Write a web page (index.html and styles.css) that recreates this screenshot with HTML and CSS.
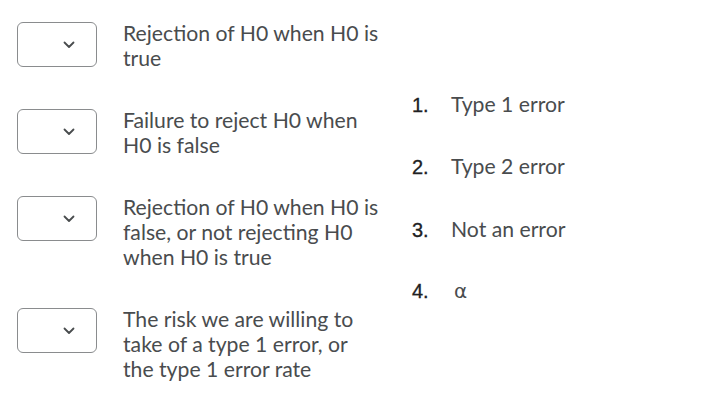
FILE: index.html
```html
<!DOCTYPE html>
<html>
<head>
<meta charset="utf-8">
<link rel="stylesheet" href="styles.css">
</head>
<body>
<div class="page">
  <div class="questions">
    <div class="row">
      <div class="select"><svg class="chev" width="12" height="8" viewBox="0 0 12 8"><path d="M1.5 1.5 L6 6 L10.5 1.5" fill="none" stroke="#494c4e" stroke-width="1.8" stroke-linecap="round" stroke-linejoin="round"/></svg></div>
      <div class="qtext">Rejection of H0 when H0 is true</div>
    </div>
    <div class="row">
      <div class="select"><svg class="chev" width="12" height="8" viewBox="0 0 12 8"><path d="M1.5 1.5 L6 6 L10.5 1.5" fill="none" stroke="#494c4e" stroke-width="1.8" stroke-linecap="round" stroke-linejoin="round"/></svg></div>
      <div class="qtext">Failure to reject H0 when H0 is false</div>
    </div>
    <div class="row">
      <div class="select"><svg class="chev" width="12" height="8" viewBox="0 0 12 8"><path d="M1.5 1.5 L6 6 L10.5 1.5" fill="none" stroke="#494c4e" stroke-width="1.8" stroke-linecap="round" stroke-linejoin="round"/></svg></div>
      <div class="qtext">Rejection of H0 when H0 is false, or not rejecting H0 when H0 is true</div>
    </div>
    <div class="row">
      <div class="select"><svg class="chev" width="12" height="8" viewBox="0 0 12 8"><path d="M1.5 1.5 L6 6 L10.5 1.5" fill="none" stroke="#494c4e" stroke-width="1.8" stroke-linecap="round" stroke-linejoin="round"/></svg></div>
      <div class="qtext">The risk we are willing to take of a type 1 error, or the type 1 error rate</div>
    </div>
  </div>
  <ol class="answers">
    <li><span class="num">1.</span><span class="atext">Type 1 error</span></li>
    <li><span class="num">2.</span><span class="atext">Type 2 error</span></li>
    <li><span class="num">3.</span><span class="atext">Not an error</span></li>
    <li><span class="num">4.</span><span class="atext alpha">α</span></li>
  </ol>
</div>
</body>
</html>
```
FILE: styles.css
```css
html, body {
  margin: 0;
  padding: 0;
  background: #ffffff;
}
body {
  font-family: Lato, "Noto Sans", sans-serif;
  color: #494c4e;
}
.page {
  display: flex;
  align-items: flex-start;
  padding: 21px 0 0 17px;
}
.questions {
  display: flex;
  flex-direction: column;
  gap: 37px;
}
.row {
  display: flex;
  align-items: flex-start;
}
.select {
  box-sizing: border-box;
  width: 80px;
  height: 45px;
  margin-top: 1px;
  border: 1px solid #8a8c8e;
  border-radius: 6px;
  display: flex;
  align-items: center;
  justify-content: flex-end;
  padding-right: 21px;
}
.chev {
  display: block;
}
.qtext {
  width: 256px;
  margin-left: 26px;
  font-size: 21.2px;
  line-height: 25px;
}
.answers {
  list-style: none;
  margin: 71px 0 0 33px;
  padding: 0;
  display: flex;
  flex-direction: column;
  gap: 37.3px;
}
.answers li {
  display: flex;
  align-items: baseline;
  height: 25px;
  line-height: 25px;
}
.num {
  width: 39px;
  font-family: "Liberation Sans", Arial, sans-serif;
  font-size: 20px;
  color: #202122;
  -webkit-text-stroke: 0.3px #202122;
}
.atext {
  font-size: 21.2px;
}
.alpha {
  font-family: "DejaVu Sans", sans-serif;
  font-size: 20px;
  padding-left: 3px;
}
```
